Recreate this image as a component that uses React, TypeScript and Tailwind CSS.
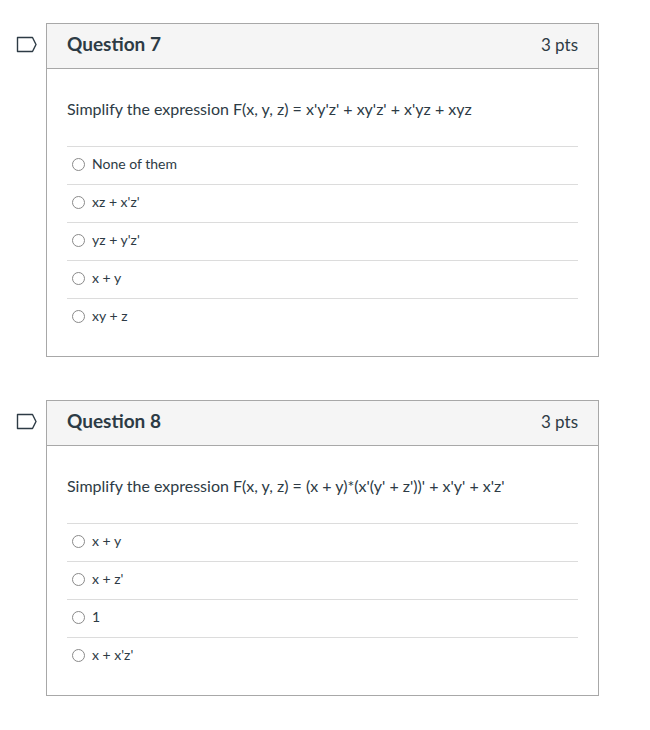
import React from "react";

type Q = { title: string; pts: string; text: string; answers: string[] };

const questions: Q[] = [
  {
    title: "Question 7",
    pts: "3 pts",
    text: "Simplify the expression F(x, y, z) = x'y'z' + xy'z' + x'yz + xyz",
    answers: ["None of them", "xz + x'z'", "yz + y'z'", "x + y", "xy + z"],
  },
  {
    title: "Question 8",
    pts: "3 pts",
    text: "Simplify the expression F(x, y, z) = (x + y)*(x'(y' + z'))' + x'y' + x'z'",
    answers: ["x + y", "x + z'", "1", "x + x'z'"],
  },
];

function Flag() {
  return (
    <svg width="22" height="17" viewBox="0 0 22 17" className="mt-[13px] shrink-0">
      <path d="M1.5 1.5 H16.5 L20 8.5 L16.5 15.5 H1.5 Z" fill="none" stroke="#2d3b45" strokeWidth="1.4" strokeLinejoin="round" />
    </svg>
  );
}

function Card({ q }: { q: Q }) {
  return (
    <div className="flex">
      <div className="w-[46px] shrink-0 pl-[16px]">
        <Flag />
      </div>
      <div className="w-[553px] shrink-0 border border-[#a8a8a8] bg-white">
        <div className="flex h-[45px] items-center justify-between border-b border-[#a8a8a8] bg-[#f5f5f5] px-[20px] pb-[3px]">
          <h2 className="text-[19px] font-bold text-[#2d3b45]">{q.title}</h2>
          <span className="text-[17px] text-[#2d3b45]">{q.pts}</span>
        </div>
        <div className="px-[20px] pt-[29px] pb-[20px]">
          <p className="text-[16px] leading-[22px] text-[#2d3b45]">{q.text}</p>
          <div className="mt-[26px]">
            {q.answers.map((a) => (
              <div key={a} className="flex h-[38px] items-center gap-[7px] border-t border-[#dcdcdc] pb-[4px] pl-[5px]">
                <span className="mt-[1px] h-[13px] w-[13px] shrink-0 rounded-full border border-[#8a8a8a] bg-white" />
                <span className="text-[14px] leading-[18px] text-[#2d3b45]">{a}</span>
              </div>
            ))}
          </div>
        </div>
      </div>
    </div>
  );
}

export default function App() {
  return (
    <div
      className="flex min-h-[730px] w-[650px] flex-col gap-[43px] bg-white pt-[23px]"
      style={{ fontFamily: "Lato, 'Noto Sans', sans-serif" }}
    >
      {questions.map((q) => (
        <Card key={q.title} q={q} />
      ))}
    </div>
  );
}
